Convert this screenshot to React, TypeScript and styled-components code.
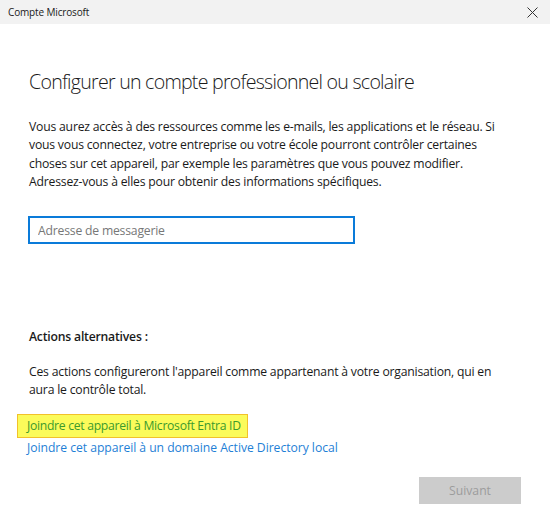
import React from "react";
import styled, { createGlobalStyle } from "styled-components";

const Global = createGlobalStyle`
  html, body { margin: 0; padding: 0; background: #ffffff; }
  body { font-family: "Open Sans", "Noto Sans", sans-serif; color: #1f1f1f; }
  * { box-sizing: border-box; }
`;

const Window = styled.div`
  width: 550px;
  height: 530px;
  display: flex;
  flex-direction: column;
  background: #ffffff;
`;

const TitleBar = styled.div`
  height: 24px;
  background: #f2f2f2;
  display: flex;
  align-items: center;
  justify-content: space-between;
  padding: 0 11px 0 8px;
  font-size: 10px;
  letter-spacing: -0.15px;
  color: #1a1a1a;
`;

const CloseButton = styled.button`
  border: none;
  background: transparent;
  padding: 0;
  width: 14px;
  height: 14px;
  display: flex;
  align-items: center;
  justify-content: center;
  color: #333;
`;

const Body = styled.div`
  flex: 1;
  display: flex;
  flex-direction: column;
  padding: 42px 0 0 29px;
`;

const Heading = styled.h1`
  margin: 0;
  font-size: 19.6px;
  font-weight: 300;
  letter-spacing: -0.75px;
  color: #1a1a1a;
  line-height: 32px;
`;

const Paragraph = styled.p<{ $top: number }>`
  margin: ${(p) => p.$top}px 0 0;
  font-size: 12.2px;
  letter-spacing: -0.2px;
  line-height: 18.3px;
  color: #1a1a1a;
`;

const EmailInput = styled.input`
  margin: 25px 0 0 -1px;
  width: 327px;
  height: 28px;
  border: 2px solid #0a7bd9;
  padding: 0 8px;
  font-family: inherit;
  font-size: 12.2px;
  letter-spacing: -0.2px;
  color: #1a1a1a;
  outline: none;
  &::placeholder { color: #777; }
`;

const SectionTitle = styled.h2`
  margin: 84px 0 0;
  font-size: 12.2px;
  letter-spacing: -0.2px;
  font-weight: 600;
  line-height: 18px;
  color: #1a1a1a;
`;

const Links = styled.div`
  display: flex;
  flex-direction: column;
  align-items: flex-start;
  margin: 14px 0 0 -12px;
`;

const ActionLink = styled.a<{ $marked?: boolean }>`
  display: inline-block;
  font-size: 12.2px;
  letter-spacing: ${(p) => (p.$marked ? "-0.3px" : "-0.05px")};
  line-height: 18px;
  text-decoration: none;
  cursor: pointer;
  padding: ${(p) => (p.$marked ? "2px 6px 2px 9px" : "0 0 0 10px")};
  margin-bottom: ${(p) => (p.$marked ? "1px" : "0")};
  color: ${(p) => (p.$marked ? "#3c9a2c" : "#1f7fd6")};
  background: ${(p) => (p.$marked ? "#fbfb5a" : "transparent")};
  border: ${(p) => (p.$marked ? "1px solid #f2c12a" : "none")};
`;

const Footer = styled.div`
  display: flex;
  justify-content: flex-end;
  padding: 0 29px 0 0;
  margin-top: 20px;
`;

const NextButton = styled.button`
  width: 102px;
  height: 27px;
  border: none;
  background: #cccccc;
  color: #9c9c9c;
  font-family: inherit;
  font-size: 12.2px;
`;

export default function App() {
  return (
    <>
      <Global />
      <Window>
        <TitleBar>
          <span>Compte Microsoft</span>
          <CloseButton aria-label="Fermer">
            <svg width="11" height="11" viewBox="0 0 11 11">
              <path d="M0.5 0.5 L10.5 10.5 M10.5 0.5 L0.5 10.5" stroke="#333" strokeWidth="1" />
            </svg>
          </CloseButton>
        </TitleBar>
        <Body>
          <Heading>Configurer un compte professionnel ou scolaire</Heading>
          <Paragraph $top={20}>
            Vous aurez accès à des ressources comme les e-mails, les applications et le réseau. Si
            <br />
            vous vous connectez, votre entreprise ou votre école pourront contrôler certaines
            <br />
            choses sur cet appareil, par exemple les paramètres que vous pouvez modifier.
            <br />
            Adressez-vous à elles pour obtenir des informations spécifiques.
          </Paragraph>
          <EmailInput placeholder="Adresse de messagerie" />
          <SectionTitle>Actions alternatives :</SectionTitle>
          <Paragraph $top={17}>
            Ces actions configureront l'appareil comme appartenant à votre organisation, qui en
            <br />
            aura le contrôle total.
          </Paragraph>
          <Links>
            <ActionLink $marked>Joindre cet appareil à Microsoft Entra ID</ActionLink>
            <ActionLink>Joindre cet appareil à un domaine Active Directory local</ActionLink>
          </Links>
          <Footer>
            <NextButton disabled>Suivant</NextButton>
          </Footer>
        </Body>
      </Window>
    </>
  );
}
